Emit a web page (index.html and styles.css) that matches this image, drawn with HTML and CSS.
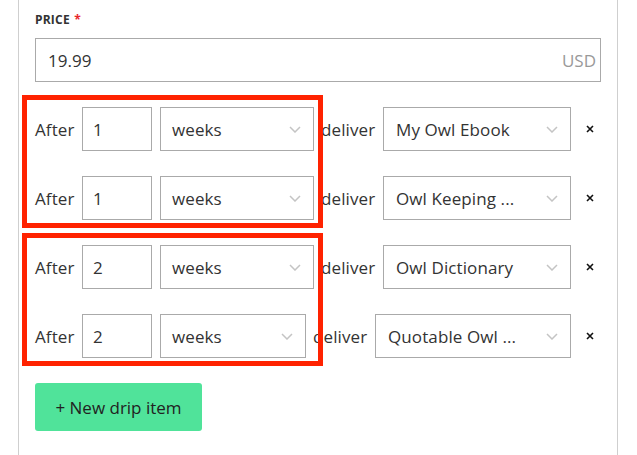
FILE: index.html
```html
<!DOCTYPE html>
<html>
<head>
<meta charset="utf-8">
<link rel="stylesheet" href="styles.css">
</head>
<body>
<div class="panel">
  <div class="label">PRICE <span class="req">*</span></div>
  <div class="price-input"><span class="price-val">19.99</span><span class="currency">USD</span></div>

  <div class="drips">
    <div class="group">
      <div class="row">
        <span class="after">After</span>
        <div class="box num">1</div>
        <div class="box sel unit">weeks<svg class="chev" width="12" height="7" viewBox="0 0 12 7"><path d="M1 1l5 5 5-5" fill="none" stroke="#c4c4c4" stroke-width="1.5"/></svg></div>
        <span class="deliver">deliver</span>
        <div class="box sel item">My Owl Ebook<svg class="chev" width="12" height="7" viewBox="0 0 12 7"><path d="M1 1l5 5 5-5" fill="none" stroke="#c4c4c4" stroke-width="1.5"/></svg></div>
        <span class="remove"><svg width="8" height="8" viewBox="0 0 8 8"><path d="M1 1l6 6M7 1l-6 6" stroke="#111" stroke-width="1.6"/></svg></span>
      </div>
      <div class="row">
        <span class="after">After</span>
        <div class="box num">1</div>
        <div class="box sel unit">weeks<svg class="chev" width="12" height="7" viewBox="0 0 12 7"><path d="M1 1l5 5 5-5" fill="none" stroke="#c4c4c4" stroke-width="1.5"/></svg></div>
        <span class="deliver">deliver</span>
        <div class="box sel item">Owl Keeping ...<svg class="chev" width="12" height="7" viewBox="0 0 12 7"><path d="M1 1l5 5 5-5" fill="none" stroke="#c4c4c4" stroke-width="1.5"/></svg></div>
        <span class="remove"><svg width="8" height="8" viewBox="0 0 8 8"><path d="M1 1l6 6M7 1l-6 6" stroke="#111" stroke-width="1.6"/></svg></span>
      </div>
      <div class="annot"></div>
    </div>
    <div class="group">
      <div class="row">
        <span class="after">After</span>
        <div class="box num">2</div>
        <div class="box sel unit">weeks<svg class="chev" width="12" height="7" viewBox="0 0 12 7"><path d="M1 1l5 5 5-5" fill="none" stroke="#c4c4c4" stroke-width="1.5"/></svg></div>
        <span class="deliver">deliver</span>
        <div class="box sel item">Owl Dictionary<svg class="chev" width="12" height="7" viewBox="0 0 12 7"><path d="M1 1l5 5 5-5" fill="none" stroke="#c4c4c4" stroke-width="1.5"/></svg></div>
        <span class="remove"><svg width="8" height="8" viewBox="0 0 8 8"><path d="M1 1l6 6M7 1l-6 6" stroke="#111" stroke-width="1.6"/></svg></span>
      </div>
      <div class="row">
        <span class="after">After</span>
        <div class="box num">2</div>
        <div class="box sel unit narrow">weeks<svg class="chev" width="12" height="7" viewBox="0 0 12 7"><path d="M1 1l5 5 5-5" fill="none" stroke="#c4c4c4" stroke-width="1.5"/></svg></div>
        <span class="deliver">deliver</span>
        <div class="box sel item">Quotable Owl ...<svg class="chev" width="12" height="7" viewBox="0 0 12 7"><path d="M1 1l5 5 5-5" fill="none" stroke="#c4c4c4" stroke-width="1.5"/></svg></div>
        <span class="remove"><svg width="8" height="8" viewBox="0 0 8 8"><path d="M1 1l6 6M7 1l-6 6" stroke="#111" stroke-width="1.6"/></svg></span>
      </div>
      <div class="annot"></div>
    </div>
  </div>

  <button class="add">+ New drip item</button>
</div>
</body>
</html>
```

FILE: styles.css
```css
html, body {
  margin: 0;
  padding: 0;
  background: #fff;
}
body {
  font-family: "Open Sans", "Noto Sans", sans-serif;
  color: #333;
}
.panel {
  margin-left: 18px;
  width: 566px;
  min-height: 455px;
  box-sizing: content-box;
  border-left: 1px solid #cfcfcf;
  border-right: 1px solid #cfcfcf;
  padding: 12px 16px 0 16px;
}
.label {
  font-size: 12px;
  font-weight: 700;
  line-height: 16px;
  color: #333;
  letter-spacing: 0.2px;
  margin-bottom: 10px;
}
.req {
  color: #e8262b;
  margin-left: 1px;
}
.price-input {
  height: 44px;
  box-sizing: border-box;
  border: 1px solid #aaa;
  display: flex;
  align-items: center;
  justify-content: space-between;
  padding: 0 4px 0 12px;
  font-size: 17px;
}
.price-val { color: #333; }
.currency { color: #999; }
.drips {
  display: flex;
  flex-direction: column;
  gap: 25px;
  margin-top: 25px;
}
.group {
  position: relative;
  display: flex;
  flex-direction: column;
  gap: 25px;
}
.annot {
  position: absolute;
  left: -13px;
  width: 301px;
  top: -12px;
  bottom: -8px;
  box-sizing: border-box;
  border: 5px solid #ff2200;
  pointer-events: none;
}
.row {
  display: flex;
  align-items: center;
  height: 44px;
  font-size: 17px;
  letter-spacing: 0.1px;
}
.after {
  width: 47px;
  flex: none;
}
.box {
  height: 44px;
  box-sizing: border-box;
  border: 1px solid #aaa;
  display: flex;
  align-items: center;
  flex: none;
}
.num {
  width: 70px;
  padding-left: 10px;
}
.sel {
  justify-content: space-between;
}
.unit {
  width: 154px;
  margin-left: 8px;
  padding: 0 12px 0 11px;
}
.unit.narrow {
  width: 146px;
}
.deliver {
  width: 62px;
  margin-left: 7px;
  flex: none;
}
.item {
  flex: 1;
  padding: 0 12px 0 12px;
  white-space: nowrap;
}
.remove {
  width: 30px;
  flex: none;
  display: flex;
  justify-content: flex-end;
  padding-right: 7px;
  box-sizing: border-box;
}
.add {
  margin-top: 25px;
  width: 167px;
  height: 48px;
  border: none;
  border-radius: 3px;
  background: #50e39a;
  color: #222;
  font-family: "Open Sans", "Noto Sans", sans-serif;
  font-size: 17px;
  padding: 0;
}
```
